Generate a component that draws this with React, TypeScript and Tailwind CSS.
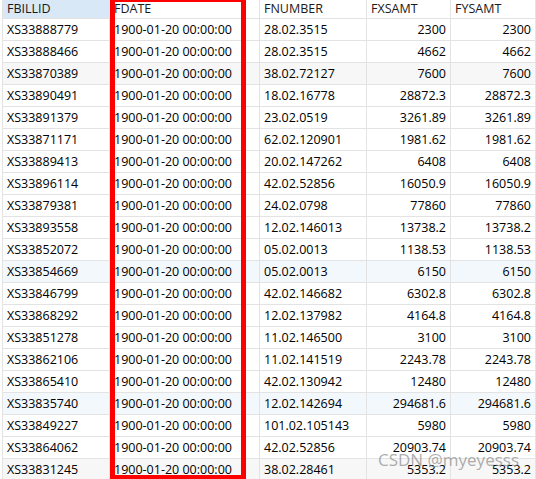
const rows: [string, string, string][] = [
  ["XS33888779", "28.02.3515", "2300"],
  ["XS33888466", "28.02.3515", "4662"],
  ["XS33870389", "38.02.72127", "7600"],
  ["XS33890491", "18.02.16778", "28872.3"],
  ["XS33891379", "23.02.0519", "3261.89"],
  ["XS33871171", "62.02.120901", "1981.62"],
  ["XS33889413", "20.02.147262", "6408"],
  ["XS33896114", "42.02.52856", "16050.9"],
  ["XS33879381", "24.02.0798", "77860"],
  ["XS33893558", "12.02.146013", "13738.2"],
  ["XS33852072", "05.02.0013", "1138.53"],
  ["XS33854669", "05.02.0013", "6150"],
  ["XS33846799", "42.02.146682", "6302.8"],
  ["XS33868292", "12.02.137982", "4164.8"],
  ["XS33851278", "11.02.146500", "3100"],
  ["XS33862106", "11.02.141519", "2243.78"],
  ["XS33865410", "42.02.130942", "12480"],
  ["XS33835740", "12.02.142694", "294681.6"],
  ["XS33849227", "101.02.105143", "5980"],
  ["XS33864062", "42.02.52856", "20903.74"],
  ["XS33831245", "38.02.28461", "5353.2"],
];

// faint row tints seen in the grid
const tint: Record<number, string> = {
  2: "bg-[#f7f7f7]",
  11: "bg-[#f3f8fd]",
  17: "bg-[#f3f8fd]",
  20: "bg-[#f7f7f7]",
};

const cols = "grid grid-cols-[108px_150px_107px_84px_85px]";
const cell = "border-r border-b border-[#e3e3e3] px-[4px] whitespace-nowrap overflow-hidden";

export default function App() {
  return (
    <div
      className="relative w-[536px] h-[479px] overflow-hidden bg-white text-[12.5px] text-black"
      style={{ fontFamily: '"Open Sans", "Noto Sans", sans-serif' }}
    >
      <div className="ml-[2px]">
        {/* header */}
        <div className={`${cols} h-[19px] leading-[18px] text-[#1a1a1a]`}>
          <div className={`${cell} border-l bg-[#d9e8f6]`}>FBILLID</div>
          <div className={cell}>FDATE</div>
          <div className={cell}>FNUMBER</div>
          <div className={cell}>FXSAMT</div>
          <div className={cell}>FYSAMT</div>
        </div>
        {rows.map(([id, num, amt], i) => (
          <div key={id} className={`${cols} h-[22px] leading-[21px] ${tint[i] ?? ""}`}>
            <div className={`${cell} border-l`}>{id}</div>
            <div className={cell}>1900-01-20 00:00:00</div>
            <div className={cell}>{num}</div>
            <div className={`${cell} text-right`}>{amt}</div>
            <div className={`${cell} text-right`}>{amt}</div>
          </div>
        ))}
      </div>

      {/* red highlight box */}
      <div className="absolute left-[110px] top-[-3px] w-[136px] h-[483px] border-[5px] border-[#ff0000]" />

      {/* watermark */}
      <div className="absolute left-[378px] top-[447px] text-[17px] text-[#8a8a8a]/70">
        CSDN @myeyesss
      </div>
    </div>
  );
}
